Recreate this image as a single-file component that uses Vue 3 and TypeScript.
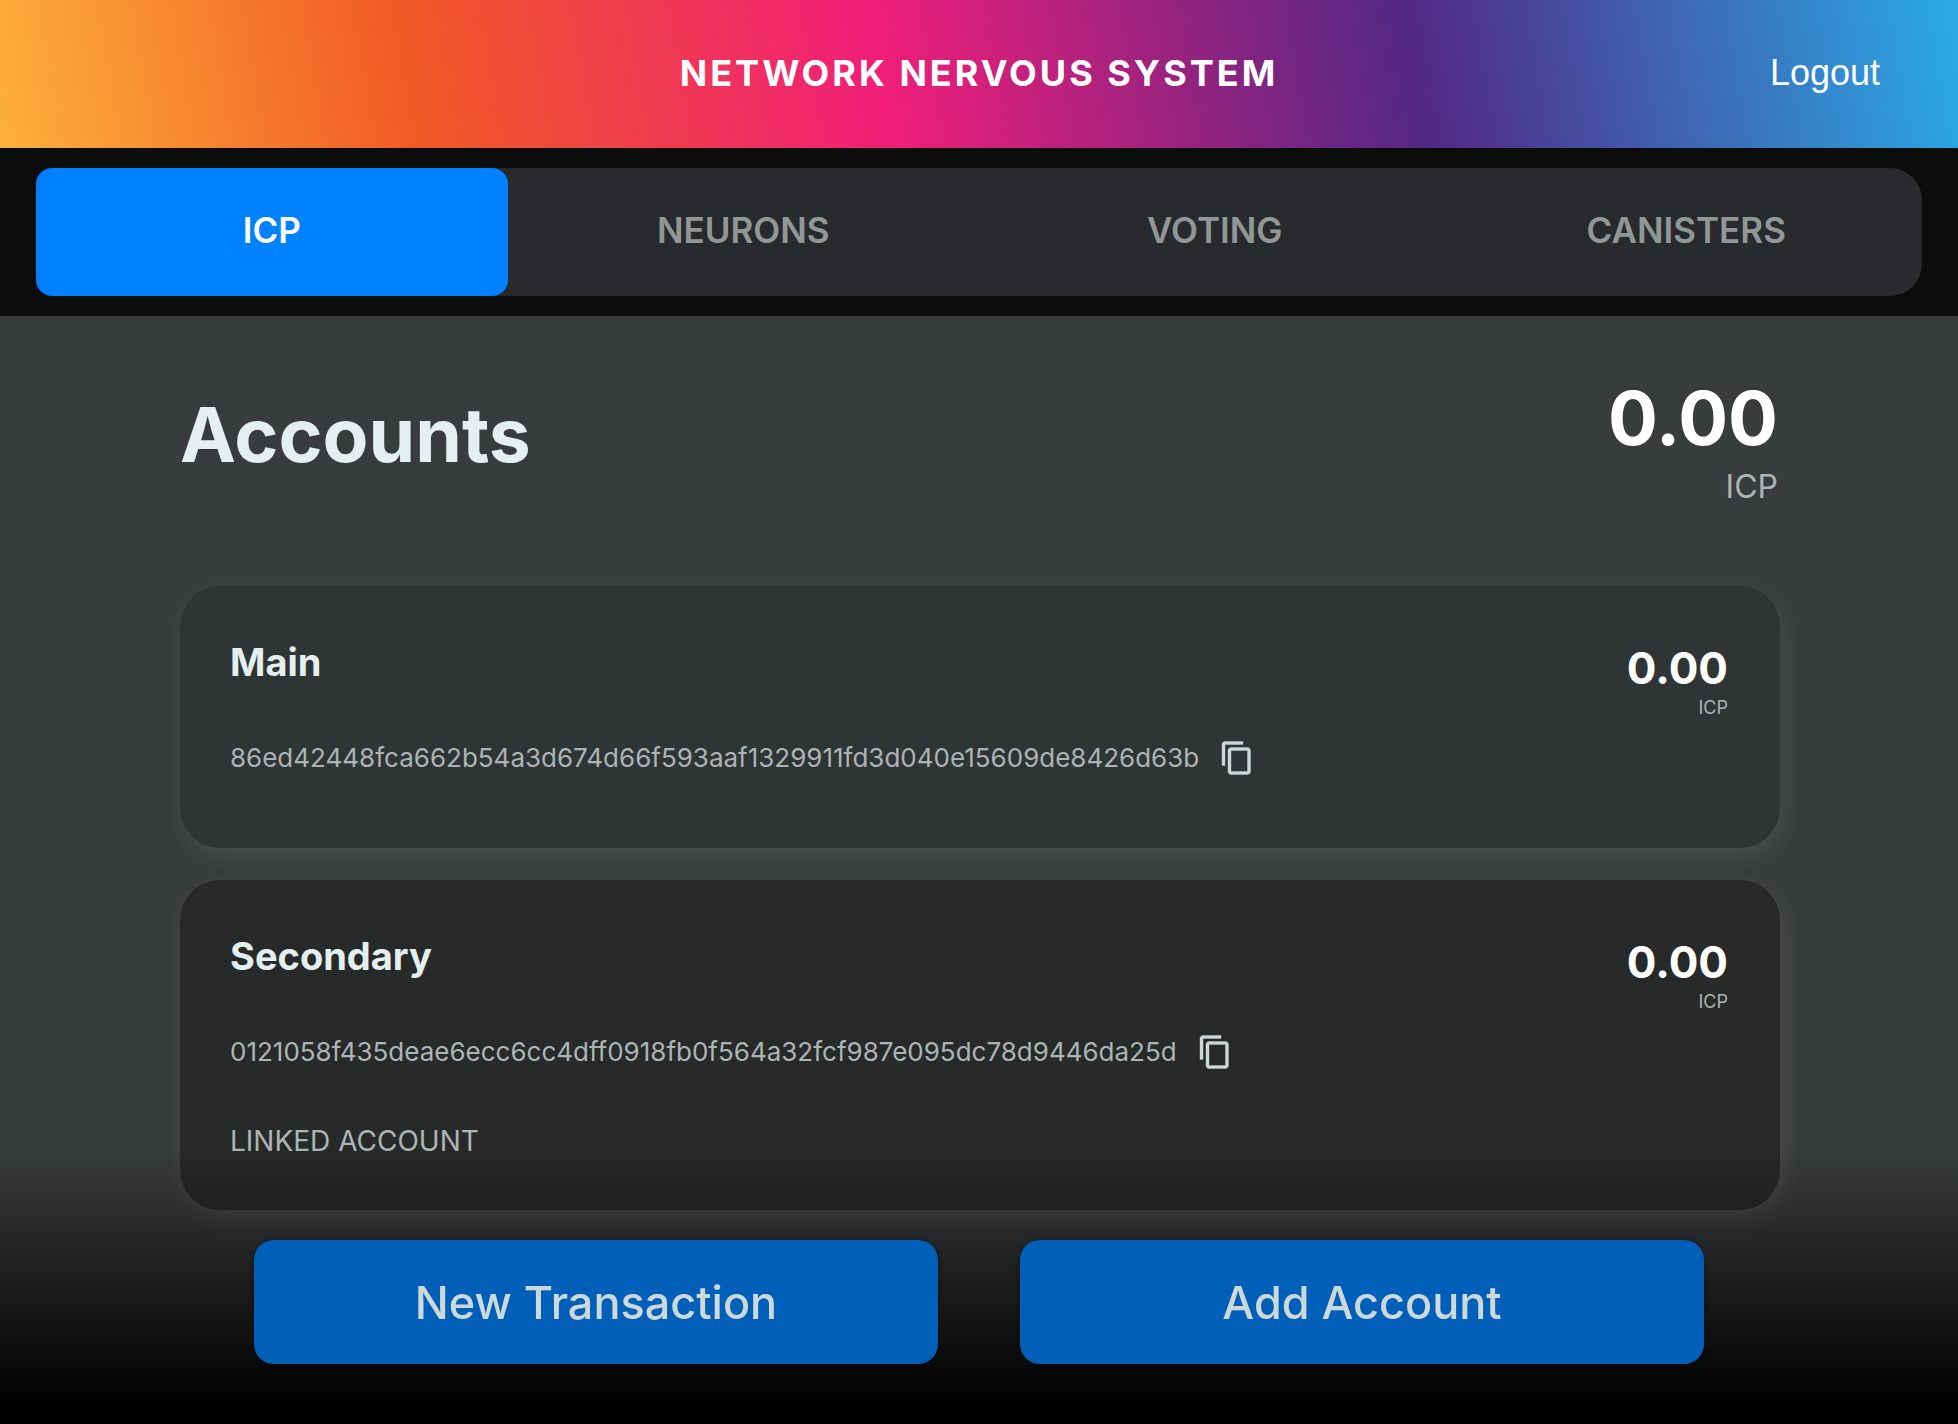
<script setup lang="ts">
import { ref } from 'vue'

interface Account {
  name: string
  address: string
  balance: string
  primary: boolean
  note?: string
}

const tabs: string[] = ['ICP', 'NEURONS', 'VOTING', 'CANISTERS']
const activeTab = ref<string>('ICP')

const accounts: Account[] = [
  {
    name: 'Main',
    address: '86ed42448fca662b54a3d674d66f593aaf1329911fd3d040e15609de8426d63b',
    balance: '0.00',
    primary: true,
  },
  {
    name: 'Secondary',
    address: '0121058f435deae6ecc6cc4dff0918fb0f564a32fcf987e095dc78d9446da25d',
    balance: '0.00',
    primary: false,
    note: 'LINKED ACCOUNT',
  },
]

function copyAddress(address: string): void {
  void navigator.clipboard?.writeText(address)
}
</script>

<template>
  <div class="app">
    <header class="banner">
      <h1 class="brand">NETWORK NERVOUS SYSTEM</h1>
      <button type="button" class="logout">Logout</button>
    </header>

    <nav class="nav">
      <div class="tabs">
        <button
          v-for="tab in tabs"
          :key="tab"
          type="button"
          class="tab"
          :class="{ active: tab === activeTab }"
          @click="activeTab = tab"
        >
          {{ tab }}
        </button>
      </div>
    </nav>

    <main class="content">
      <div class="summary">
        <h2 class="title">Accounts</h2>
        <div class="balance">
          <span class="amount">0.00</span>
          <span class="unit">ICP</span>
        </div>
      </div>

      <article
        v-for="account in accounts"
        :key="account.address"
        class="card"
        :class="{ primary: account.primary }"
      >
        <div class="details">
          <h3 class="name">{{ account.name }}</h3>
          <div class="identifier">
            <span class="address">{{ account.address }}</span>
            <button
              type="button"
              class="copy"
              aria-label="Copy account identifier"
              @click="copyAddress(account.address)"
            >
              <svg viewBox="0 0 24 24" width="36" height="36" fill="currentColor">
                <path
                  d="M16 1H4c-1.1 0-2 .9-2 2v14h2V3h12V1zm3 4H8c-1.1 0-2 .9-2 2v14c0 1.1.9 2 2 2h11c1.1 0 2-.9 2-2V7c0-1.1-.9-2-2-2zm0 16H8V7h11v14z"
                  stroke="currentColor"
                  stroke-width=".25"
                />
              </svg>
            </button>
          </div>
          <p v-if="account.note" class="note">{{ account.note }}</p>
        </div>
        <div class="balance small">
          <span class="amount">{{ account.balance }}</span>
          <span class="unit">ICP</span>
        </div>
      </article>
    </main>

    <footer class="actions">
      <button type="button" class="action">New Transaction</button>
      <button type="button" class="action">Add Account</button>
    </footer>
  </div>
</template>

<style>
body {
  background: #393c3d;
}
</style>

<style scoped>
.app {
  min-height: 100vh;
  font-family: Inter, 'Liberation Sans', sans-serif;
  color: #e4f0f0;
}

button {
  margin: 0;
  padding: 0;
  border: 0;
  background: none;
  font: inherit;
  color: inherit;
  cursor: pointer;
}

h1,
h2,
h3,
p {
  margin: 0;
}

.banner {
  display: grid;
  grid-template-columns: 1fr auto 1fr;
  align-items: center;
  box-sizing: border-box;
  height: 148px;
  padding: 0 78px 2px;
  background: linear-gradient(80deg, #fdb03b 0%, #f15a24 21%, #f01e79 45%, #522785 72%, #29abe6 100%);
}

.brand {
  grid-column: 2;
  font-size: 36px;
  line-height: 48px;
  font-weight: 700;
  letter-spacing: 3px;
  color: #fff;
}

.logout {
  justify-self: end;
  font-family: 'Liberation Sans', Arial, sans-serif;
  font-size: 36px;
  line-height: 48px;
  color: #fff;
}

.nav {
  padding: 20px 36px;
  background: #0a0d0c;
}

.tabs {
  display: flex;
  border-radius: 32px;
  background: #292a2d;
}

.tab {
  flex: 1;
  height: 128px;
  padding-bottom: 4px;
  border-radius: 16px;
  font-size: 35px;
  font-weight: 600;
  color: #909897;
}

.tab.active {
  background: #0081ff;
  color: #fff;
}

.content {
  display: flex;
  flex-direction: column;
  gap: 32px;
  padding: 64px 178px 214px 180px;
}

.summary {
  display: flex;
  justify-content: space-between;
  align-items: flex-start;
  height: 174px;
}

.title {
  padding-top: 7px;
  font-size: 75px;
  line-height: 96px;
  font-weight: 700;
}

.balance {
  display: flex;
  flex-direction: column;
  align-items: flex-end;
  padding-right: 2px;
}

.amount {
  font-size: 74px;
  line-height: 76px;
  font-weight: 700;
  color: #fff;
}

.unit {
  font-size: 32px;
  line-height: 62px;
  color: #acb5b5;
}

.small .amount {
  font-size: 44px;
  line-height: 64px;
}

.small .unit {
  font-size: 18px;
  line-height: 16px;
}

.card {
  display: flex;
  justify-content: space-between;
  padding: 50px;
  border-radius: 40px;
  background: #282a29;
  box-shadow: 4px 8px 24px rgba(255, 255, 255, 0.09);
}

.card.primary {
  background: #2f3434;
}

.name {
  font-size: 38px;
  line-height: 52px;
  font-weight: 700;
}

.identifier {
  display: flex;
  align-items: center;
  gap: 20px;
  height: 36px;
  margin: 52px 0 22px;
}

.address {
  font-size: 26px;
  line-height: 36px;
  color: #acb5b5;
}

.copy {
  display: flex;
  color: #cdd8d8;
}

.note {
  margin-top: 54px;
  padding-bottom: 2px;
  font-size: 28px;
  line-height: 34px;
  color: #acb5b5;
}

.actions {
  position: fixed;
  right: 0;
  bottom: 0;
  left: 0;
  display: flex;
  gap: 82px;
  padding: 100px 254px 60px;
  background: linear-gradient(to bottom, rgba(0, 0, 0, 0) 3%, #000 95%);
}

.action {
  flex: 1;
  height: 124px;
  border-radius: 20px;
  background: #0060b9;
  box-shadow: 0 2px 6px rgba(0, 0, 0, 0.4);
  font-size: 45px;
  font-weight: 500;
  color: #cdd8d8;
}
</style>
